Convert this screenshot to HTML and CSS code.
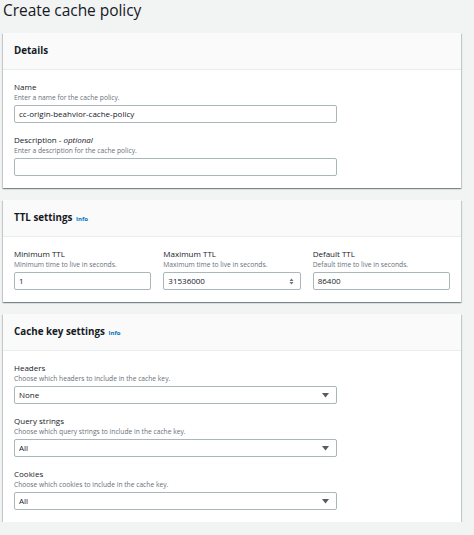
FILE: index.html
```html
<!DOCTYPE html>
<html>
<head>
<meta charset="utf-8">
<link rel="stylesheet" href="styles.css">
</head>
<body>
<div class="page">
  <h1 class="title">Create cache policy</h1>

  <section class="panel">
    <div class="panel-head"><h2>Details</h2></div>
    <div class="panel-body">
      <div class="field">
        <div class="label">Name</div>
        <div class="help">Enter a name for the cache policy.</div>
        <div class="input wide">cc-origin-beahvior-cache-policy</div>
      </div>
      <div class="field">
        <div class="label">Description - <i>optional</i></div>
        <div class="help">Enter a description for the cache policy.</div>
        <div class="input wide"></div>
      </div>
    </div>
  </section>

  <section class="panel">
    <div class="panel-head"><h2>TTL settings <a class="info">Info</a></h2></div>
    <div class="panel-body">
      <div class="cols">
        <div class="field">
          <div class="label">Minimum TTL</div>
          <div class="help">Minimum time to live in seconds.</div>
          <div class="input">1</div>
        </div>
        <div class="field">
          <div class="label">Maximum TTL</div>
          <div class="help">Maximum time to live in seconds.</div>
          <div class="input spin">31536000
            <svg class="spinner" width="5" height="7" viewBox="0 0 5 7"><path d="M0.5 3 L2.5 0.6 L4.5 3 Z M0.5 4 L2.5 6.4 L4.5 4 Z" fill="#687078"/></svg>
          </div>
        </div>
        <div class="field">
          <div class="label">Default TTL</div>
          <div class="help">Default time to live in seconds.</div>
          <div class="input">86400</div>
        </div>
      </div>
    </div>
  </section>

  <section class="panel">
    <div class="panel-head"><h2>Cache key settings <a class="info">Info</a></h2></div>
    <div class="panel-body">
      <div class="field">
        <div class="label">Headers</div>
        <div class="help">Choose which headers to include in the cache key.</div>
        <div class="input wide select">None<svg class="caret" width="7" height="5" viewBox="0 0 7 5"><path d="M0 0 L7 0 L3.5 4.5 Z" fill="#545b64"/></svg></div>
      </div>
      <div class="field">
        <div class="label">Query strings</div>
        <div class="help">Choose which query strings to include in the cache key.</div>
        <div class="input wide select">All<svg class="caret" width="7" height="5" viewBox="0 0 7 5"><path d="M0 0 L7 0 L3.5 4.5 Z" fill="#545b64"/></svg></div>
      </div>
      <div class="field">
        <div class="label">Cookies</div>
        <div class="help">Choose which cookies to include in the cache key.</div>
        <div class="input wide select">All<svg class="caret" width="7" height="5" viewBox="0 0 7 5"><path d="M0 0 L7 0 L3.5 4.5 Z" fill="#545b64"/></svg></div>
      </div>
    </div>
  </section>
</div>
</body>
</html>
```
FILE: styles.css
```css
html, body {
  margin: 0;
  padding: 0;
  background: #f2f3f3;
}
body {
  font-family: "Open Sans", "Noto Sans", sans-serif;
  color: #16191f;
}
.page {
  padding: 0 13px 0 3px;
  display: flex;
  flex-direction: column;
  gap: 12px;
}
.title {
  margin: 0;
  font-size: 15.5px;
  font-weight: 400;
  line-height: 21.2px;
  height: 21px;
  color: #16191f;
  letter-spacing: -0.05px;
}
.panel {
  background: #fff;
  box-shadow: 0 1px 1px 0 rgba(0,28,36,.3), 1px 1px 1px 0 rgba(0,28,36,.15), -1px 1px 1px 0 rgba(0,28,36,.15);
}
.panel-head {
  background: #fafafa;
  border-bottom: 1px solid #eaeded;
  height: 37px;
  box-sizing: border-box;
  padding: 0 11px;
  display: flex;
  align-items: center;
}
.panel-head h2 {
  margin: 0;
  font-size: 9.8px;
  font-weight: 700;
  line-height: 12px;
}
.info {
  color: #0073bb;
  font-size: 6px;
  font-weight: 700;
  margin-left: 1px;
}
.panel-body {
  padding: 11px 11px 12px 11px;
  display: flex;
  flex-direction: column;
  gap: 11px;
}
.cols {
  display: grid;
  grid-template-columns: 1fr 1fr 1fr;
  gap: 12px;
}
.field {
  display: flex;
  flex-direction: column;
}
.label {
  font-size: 8px;
  line-height: 11px;
  color: #16191f;
}
.label i {
  font-style: italic;
}
.help {
  font-size: 6.7px;
  line-height: 11px;
  color: #687078;
}
.input {
  margin-top: 2px;
  height: 18px;
  box-sizing: border-box;
  border: 1px solid #aab7b8;
  border-radius: 2px;
  background: #fff;
  font-size: 8px;
  line-height: 16px;
  padding: 0 4px;
  color: #16191f;
  display: flex;
  align-items: center;
  justify-content: space-between;
}
.input.wide {
  width: 323px;
}
.spinner {
  margin-right: 2px;
}
.caret {
  margin-right: 3px;
}
```
